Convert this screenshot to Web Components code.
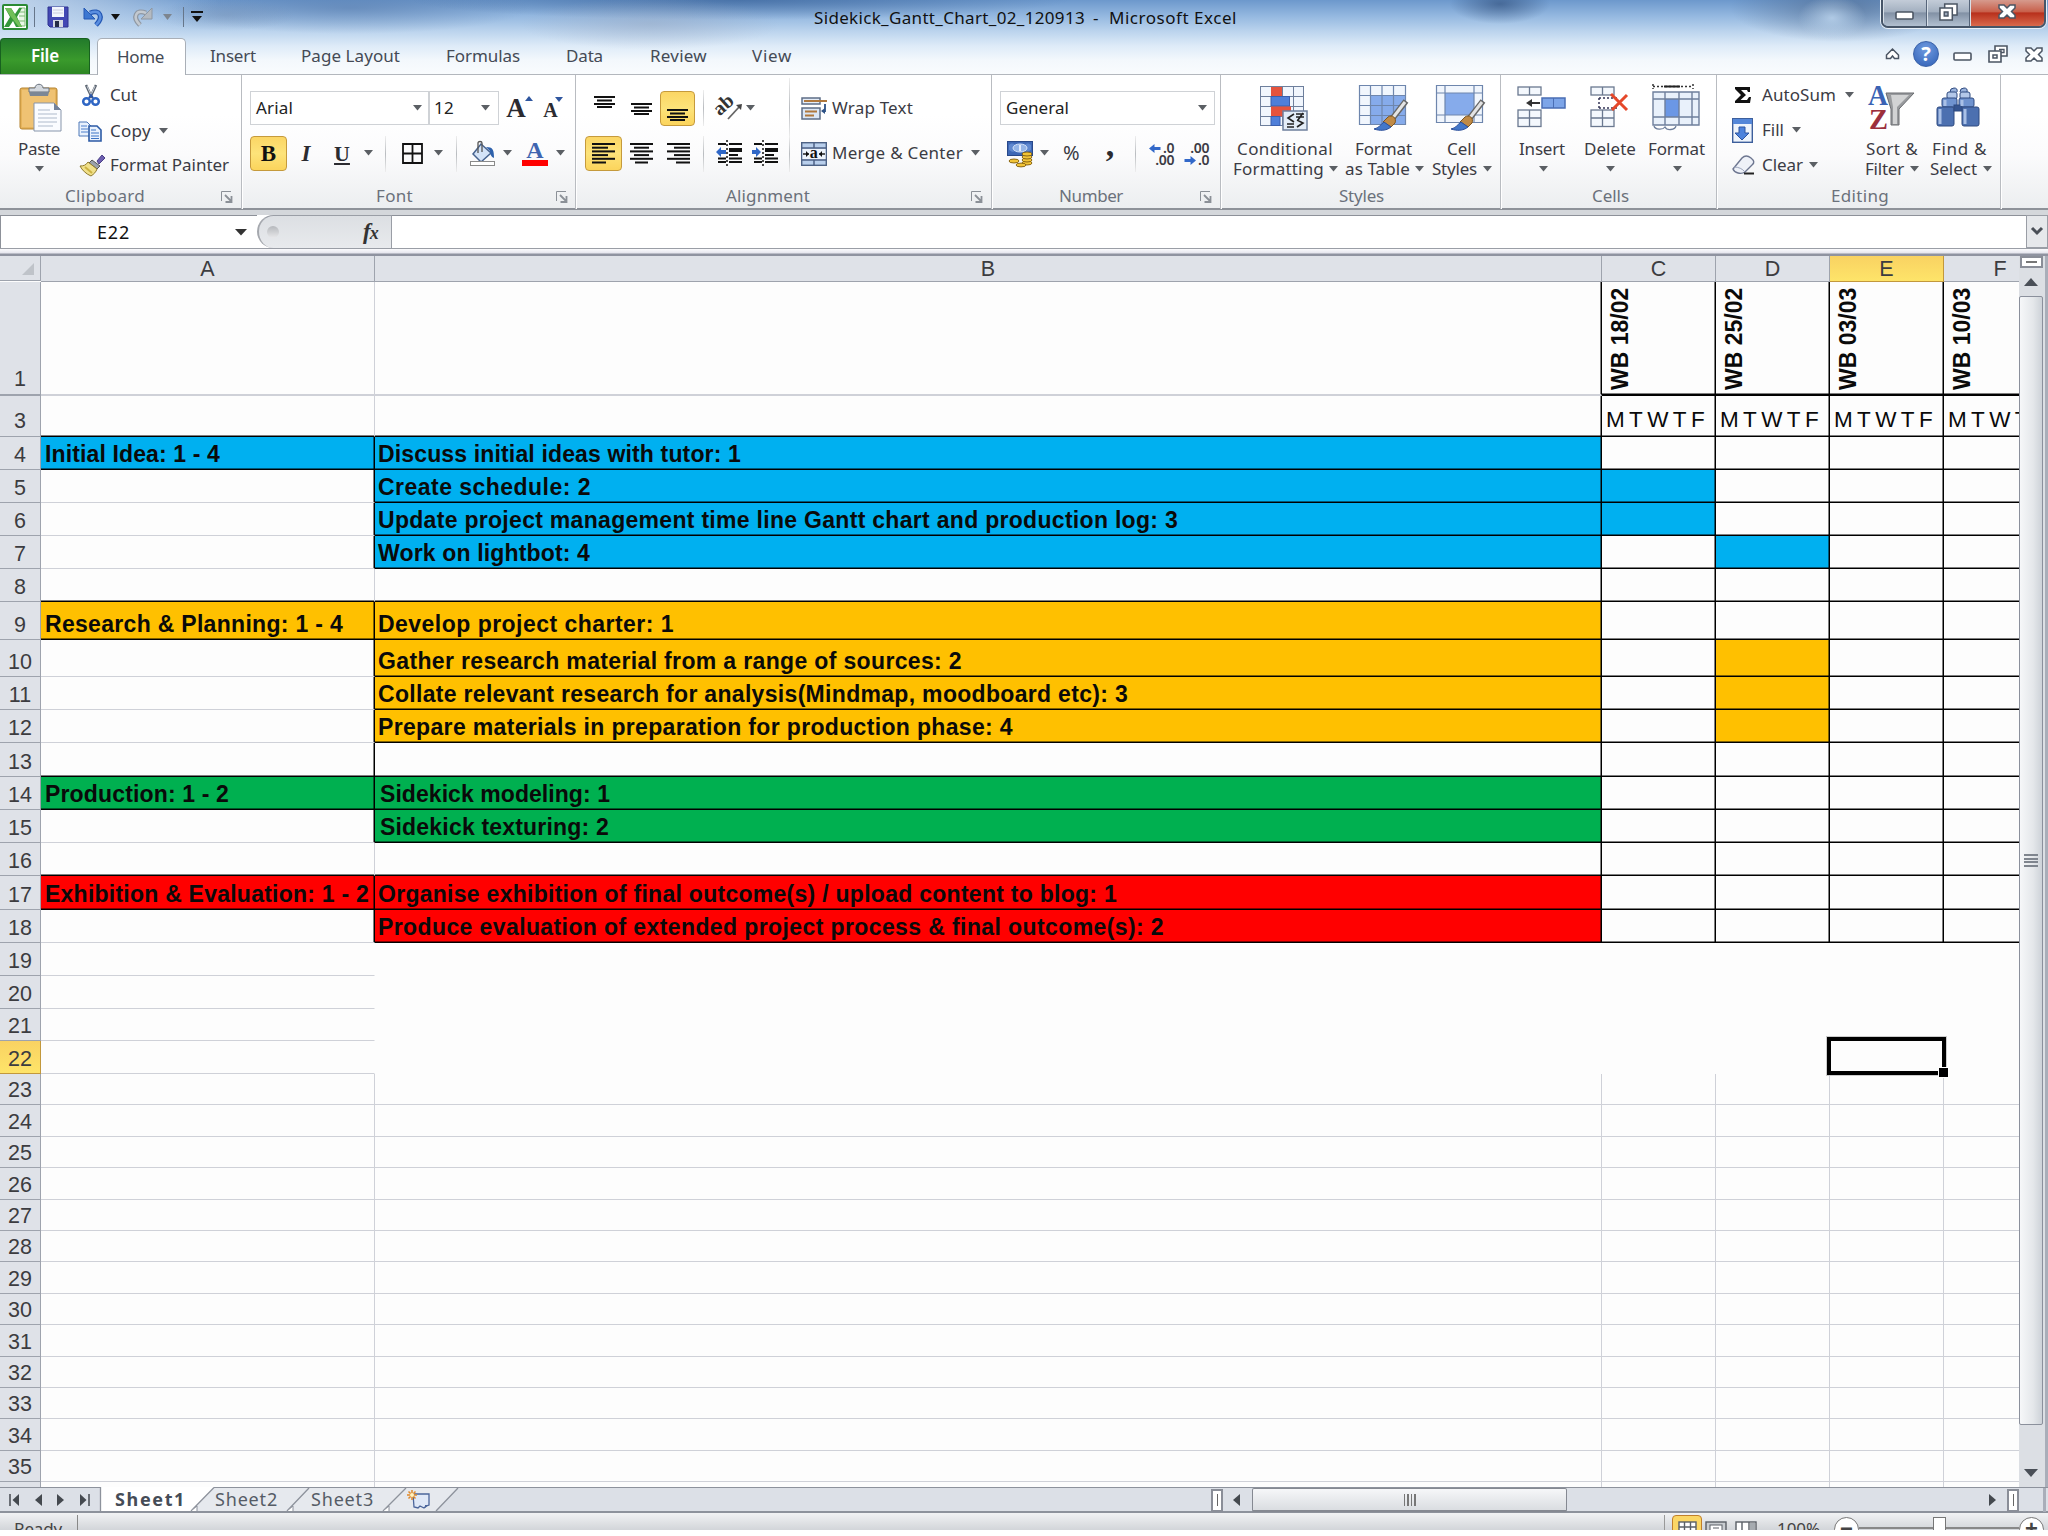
<!DOCTYPE html>
<html lang="en">
<head>
<meta charset="utf-8">
<title>Sidekick_Gantt_Chart_02_120913 - Microsoft Excel</title>
<style>
html,body{margin:0;padding:0;background:#fff;overflow:hidden}
body{width:2048px;height:1536px;font-family:"Noto Sans","Open Sans",sans-serif}
</style>
</head>
<body>
<excel-window></excel-window>
<script>
const UI='"Noto Sans","Open Sans",sans-serif', SHEET='"Liberation Sans",Arial,sans-serif';
const define=(tag,css,html,after)=>customElements.define(tag,class extends HTMLElement{
  connectedCallback(){
    if(this.shadowRoot)return;
    const r=this.attachShadow({mode:'open'});
    r.innerHTML='<style>*{box-sizing:border-box}'+css+'</style>'+(typeof html==='function'?html(this):html);
    if(after)after(this,r);
  }
});

/* Text whose tracking is fitted to the width in its w attribute. */
customElements.define('ui-text',class extends HTMLElement{
  connectedCallback(){
    if(this.shadowRoot)return;
    const r=this.attachShadow({mode:'open'}), t=this.getAttribute('t'), w=+this.getAttribute('w');
    r.innerHTML='<style>:host{display:block;white-space:pre;flex:none}span{display:inline-block}</style><span></span>';
    const s=r.querySelector('span'); s.textContent=t;
    if(w){
      const n=s.getBoundingClientRect().width;
      s.style.letterSpacing=((w-n)/t.length).toFixed(3)+'px';
    }
  }
});
const T=(t,w,st='')=>`<ui-text t="${t.replace(/&/g,'&amp;')}" w="${w||''}" style="${st}"></ui-text>`;

/* ---------- icons ---------- */
const lines=(xs)=>xs.map(([x,y,w])=>`<rect x="${x}" y="${y}" width="${w}" height="2"/>`).join('');
const brush='<path d="M47 16 33 34" stroke="#666" stroke-width="6"/><path d="M46 17 33 34" stroke="#e4e4e4" stroke-width="3"/><path d="M29 32c4-3 9 1 7 6l-4 4-8-5z" fill="#c08a45" stroke="#7d5520"/><path d="M25 37l7 5c-5 4-11 4-17 2 5-1 6-4 10-7z" fill="#4377c9" stroke="#2c509c"/>';
const G={
 excel:[26,26,'<rect x="1" y="1" width="24" height="24" rx="1" fill="#fff" stroke="#2c8a35" stroke-width="2"/><path d="M17 4h6v18h-6" fill="#e9f6e6" stroke="#7dbb74"/><path d="M17 8h6M17 12h6M17 17h6" stroke="#7dbb74"/><path d="M3 4h6l4 6 4-6h3l-5 9 5 10h-6l-3-6-4 6H2l6-10z" fill="#35973a"/><path d="M3 4l6 9 8 10h3L9 4z" fill="#72bf58"/>'],
 save:[22,22,'<path d="M1 1h20v20H3l-2-2z" fill="#4348b4" stroke="#2e3290"/><rect x="5" y="1" width="12" height="10" fill="#f2f5fd"/><path d="M6 4h10M6 7h10" stroke="#ccd"/><rect x="6" y="14" width="10" height="7" fill="#d5dae2"/><rect x="8" y="15" width="4" height="6" fill="#252d45"/>'],
 undo:[20,18,'<path d="M7 5c10-4 14 4 6 12" fill="none" stroke="#2458b4" stroke-width="5"/><path d="M1 0v11h11z" fill="#3c77d1" stroke="#2458b4"/><path d="M7 5c10-4 14 4 6 12" fill="none" stroke="#5a8ee0" stroke-width="2.5"/>'],
 redo:[20,18,'<path d="M13 5C3 1 -1 9 7 17" fill="none" stroke="#8f98a3" stroke-width="5"/><path d="M19 0v11H8z" fill="#b4bac1" stroke="#8f98a3"/><path d="M13 5C3 1 -1 9 7 17" fill="none" stroke="#c3c9d0" stroke-width="2.5"/>'],
 custom:[12,12,'<path d="M0 1h12" stroke="#111" stroke-width="2"/><path d="M1 5h10l-5 6z" fill="#111"/>'],
 dd:[10,6,'<path d="M0 0h10L5 6z" fill="currentColor"/>'],
 paste:[44,48,'<rect x="1" y="4" width="37" height="41" rx="2" fill="#e6b45c" stroke="#b5832f"/><rect x="3" y="6" width="33" height="37" fill="#efc273"/><path d="M10 8V4h6c0-5 8-5 8 0h6v4z" fill="#d3d8de" stroke="#68717d"/><path d="M10 8h20l-1 4H11z" fill="#7c8795"/><path d="M15 19h20l7 7v21H15z" fill="#fafcff" stroke="#8795aa"/><path d="M35 19v7h7z" fill="#75839a"/><path d="M19 26h12M19 30h19M19 34h19M19 38h19M19 42h15" stroke="#aebacb"/>'],
 cut:[18,22,'<path d="M4 0l6 13M14 0L8 13" stroke="#5b6470" stroke-width="2.5"/><path d="M5 1l4 9M13 1l-4 9" stroke="#c8ced6"/><circle cx="4.5" cy="16.500" r="3.300" fill="none" stroke="#2f66c4" stroke-width="2.500"/><circle cx="13.500" cy="16.500" r="3.300" fill="none" stroke="#2f66c4" stroke-width="2.500"/><path d="M7 13l2-3 2 3" stroke="#2b55a6" fill="none" stroke-width="2"/>'],
 copy:[24,21,'<path d="M1 1h8l4 4v10H1z" fill="#eaf2fd" stroke="#4f78b8"/><path d="M3 5h6M3 8h7M3 11h7" stroke="#4d7fcb"/><path d="M11 5h8l4 4v11H11z" fill="#eaf2fd" stroke="#2c5aa5" stroke-width="1.600"/><path d="M13 9h5M13 12h8M13 15h8M13 17.500h8" stroke="#3d74c5"/>'],
 painter:[26,21,'<path d="M18 6l5-6 3 3-6 6z" fill="#6d5fb0" stroke="#4a3f87"/><path d="M13 5l8 6-3 3-8-6z" fill="#9aa1ab" stroke="#555"/><path d="M9 7l9 7c-1 3-3 5-6 7C7 19 3 15 1 11c4 0 6-1 8-4z" fill="#f0e08a" stroke="#8f7a2d"/><path d="M6 12l7 6" stroke="#cdb343" stroke-width="2"/>'],
 launch:[12,12,'<path d="M.500 10V.500H10" fill="none" stroke="#8b9097"/><path d="M4 4l6 6M10.500 5v6h-6" fill="none" stroke="#8b9097" stroke-width="1.800"/>'],
 border:[21,21,'<path d="M1 1h19v19H1zM10.500 1v19M1 10.500h19" fill="none" stroke="#111" stroke-width="1.800"/>'],
 fill:[25,25,'<path d="M11 3l10 9-10 9-8-8z" fill="#d4e3f7" stroke="#47638f" stroke-width="1.500"/><path d="M8 12V2c0-2 4-2 4 0v9" fill="none" stroke="#555" stroke-width="1.300"/><path d="M16 6c7 0 8 3 8 11-3-1-4-4-4-7z" fill="#2e61ac"/><rect x=".500" y="20.500" width="24" height="4" fill="#fff" stroke="#8a8a8a"/>'],
 orient:[26,24,'<text x="-2" y="15" transform="rotate(-42 7 13)" font-family="Liberation Serif" font-weight="bold" font-size="20" fill="#333">ab</text><path d="M10 23L22 10" stroke="#666" stroke-width="1.800"/><path d="M24 8l-6 1 5 5z" fill="#444"/>'],
 at:[23,12,lines([[1,0,21],[4,3.5,15],[1,7,21],[4,10,15]])],
 left:[23,21,lines([[0,0,23],[0,3.700,16],[0,7.400,23],[0,11.100,16],[0,14.800,23],[0,18.500,14]])],
 center:[23,21,lines([[0,0,23],[4,3.700,15],[0,7.400,23],[4,11.100,15],[0,14.800,23],[5,18.500,13]])],
 right:[23,21,lines([[0,0,23],[7,3.700,16],[0,7.400,23],[7,11.100,16],[0,14.800,23],[9,18.500,14]])],
 dec:[26,27,'<path d="M2 4h8M13 4h13M2 22h8M13 22h13" stroke="#111" stroke-width="2"/><rect x="13" y="8" width="13" height="4"/><path d="M13 15h9M2 18.500h8M13 18.500h13" stroke="#111" stroke-width="2"/><path d="M11 0v27" stroke="#111" stroke-width="1.500" stroke-dasharray="2 2"/><path d="M0 12l5-5v3h5v4H5v3z" fill="#2f67c7"/>'],
 inc:[26,27,'<path d="M2 4h8M13 4h13M2 22h8M13 22h13" stroke="#111" stroke-width="2"/><rect x="13" y="8" width="13" height="4"/><path d="M13 15h9M2 18.500h8M13 18.500h13" stroke="#111" stroke-width="2"/><path d="M11 0v27" stroke="#111" stroke-width="1.500" stroke-dasharray="2 2"/><path d="M9 12l-5-5v3H0v4h4v3z" fill="#2f67c7"/>'],
 wrap:[26,23,'<rect x="1" y="1" width="18" height="6" fill="#e5edf8" stroke="#5d6d86" stroke-width="1.500"/><path d="M3 4h23" stroke="#b0783c" stroke-width="2"/><rect x="1" y="11" width="18" height="11" fill="#dbe7f6" stroke="#5d6d86" stroke-width="1.500"/><path d="M4 14.500h12M4 18.500h9" stroke="#b0783c" stroke-width="2"/><path d="M24 7v7h-1" stroke="#2d5186" stroke-width="1.800" fill="none"/><path d="M20 14l4-3v6z" fill="#2d5186"/>'],
 merge:[26,24,'<rect x=".700" y=".700" width="24.600" height="22.600" fill="#b9cfec" stroke="#4d6285" stroke-width="1.400"/><path d="M0 6h26M0 18h26M13 0v6M13 18v6" stroke="#4d6285" stroke-width="1.500"/><rect x="1.500" y="7" width="23" height="10" fill="#eef4fc"/><path d="M2 12h6M24 12h-6" stroke="#222" stroke-width="1.500"/><path d="M8 12l-3-3v6zM18 12l3-3v6z"/><text x="8.800" y="16" font-family="Liberation Serif" font-weight="bold" font-size="16">a</text>'],
 money:[26,26,'<rect x=".500" y=".500" width="25" height="14" fill="#3d67b5" stroke="#28488a"/><path d="M2 4c3-3 6-1 6 0v6c-2 2-4 0-6-1zM24 4c-3-3-6-1-6 0v6c2 2 4 0 6-1z" fill="#5f88cf"/><ellipse cx="13" cy="7" rx="7" ry="4" fill="#94b4e6" stroke="#d6e4fa"/><path d="M13 4v6" stroke="#dfeafd" stroke-width="2"/><g fill="#f2c437" stroke="#7d5a10" stroke-width=".900"><ellipse cx="20" cy="22" rx="5" ry="2"/><ellipse cx="20" cy="19" rx="5" ry="2"/><ellipse cx="20" cy="16" rx="5" ry="2"/><ellipse cx="20" cy="13" rx="5" ry="2"/><ellipse cx="7" cy="20" rx="5" ry="2"/><ellipse cx="14" cy="24" rx="5" ry="1.900"/></g>'],
 larrow:[12,9,'<path d="M0 4.500l5.500-4.500v3h6v3h-6v3z" fill="#3268c9"/>'],
 rarrow:[12,9,'<path d="M12 4.500L6.500 0v3h-6v3h6v3z" fill="#3268c9"/>'],
 cond:[48,45,'<g stroke="#6e7f9c"><rect x=".500" y=".500" width="43" height="39" fill="#f1f6fd"/><path d="M11.500 0v40M22.500 0v40M33.500 0v40M0 10.500h44M0 20.500h44M0 30.500h44"/></g><rect x="11" y="1" width="11" height="9.500" fill="#e5533d"/><rect x="11" y="10.500" width="18.500" height="9.500" fill="#4f7fd9" stroke="#3a5fae"/><rect x="11" y="20.500" width="20" height="10" fill="#e5533d"/><rect x="11" y="30.500" width="9" height="9" fill="#4f7fd9" stroke="#3a5fae"/><rect x="23" y="25" width="24" height="19" fill="#e4edf8" stroke="#6e7f9c" stroke-width="1.500"/><path d="M34 28l-6 4 6 4M27 38h7M27 41h7M36 28h8M36 31h8M43 27l-5 7M37 34l6 3-6 4" fill="none" stroke="#222" stroke-width="1.600"/>'],
 ftable:[49,46,'<rect x=".500" y=".500" width="46" height="39" fill="#f1f6fd"/><path d="M11.500 10.500H46v29H11.500z" fill="#86abeb"/><path d="M.500.500h46v39H.500zM11.500 0v40M23 0v40M34.500 0v40M0 10.500h47M0 20.500h47M0 30.500h47" fill="none" stroke="#6e86ad" stroke-width="1.200"/>'+brush],
 cstyle:[49,46,'<rect x=".500" y=".500" width="46" height="37" fill="#f1f6fd"/><rect x="9" y="8" width="29" height="22" fill="#86abeb"/><path d="M.500.500h46v37H.500zM9 0v38M38 0v38M0 8h47M0 30h47" fill="none" stroke="#6e86ad" stroke-width="1.200"/>'+brush],
 insert:[49,42,'<g fill="#f4f8fd" stroke="#6a7890" stroke-width="1.300"><rect x="1" y="1" width="23" height="8"/><path d="M12.500 1v8"/><rect x="1" y="24" width="23" height="16.500"/><path d="M12.500 24v16M1 32h23"/></g><rect x="25" y="12" width="23" height="10" fill="#7da5e8" stroke="#4a6eb4" stroke-width="1.500"/><path d="M36.500 12v10" stroke="#4a6eb4"/><path d="M12 17h11" stroke="#333" stroke-width="2"/><path d="M9 17l6-4v8z" fill="#333"/>'],
 del:[39,42,'<g fill="#f4f8fd" stroke="#6a7890" stroke-width="1.300"><rect x="1" y="1" width="23" height="8"/><path d="M12.500 1v8"/><rect x="1" y="24" width="23" height="16.500"/><path d="M12.500 24v16M1 32h23"/></g><path d="M9 12h18M9 22h18M9 12v10" stroke="#335" stroke-dasharray="2 2" stroke-width="1.500"/><path d="M21 8l16 16M37 9L22 24" stroke="#e5482a" stroke-width="3"/>'],
 fmt:[49,46,'<path d="M1 0v5M41 0v5M1 2.500h40" stroke="#333" stroke-width="1.500" stroke-dasharray="2 2"/><path d="M12 2.500h16" stroke="#222" stroke-width="2"/><rect x="1" y="8" width="46" height="33" fill="#e9f1fb"/><rect x="13" y="15" width="14" height="18" fill="#6b97e5"/><path d="M1 8h46v33H1zM13 8v33M27 8v33M40 8v33M1 15h46M1 33h46" fill="none" stroke="#6e7f9c" stroke-width="1.400"/><path d="M2 42c1 4 9 4 11 1 2 4 10 3 11-1" fill="#fff" stroke="#6e7f9c" stroke-width="1.300"/>'],
 sigma:[16,16,'<path d="M0 0h15v5h-2L12 3H6l5 5-5.500 5H12l2-3h2l-1 6H0v-2l6-6-6-6z" fill="#111"/>'],
 filld:[21,25,'<rect x=".700" y=".700" width="19.600" height="23.600" fill="#eef4fc" stroke="#3d5f9c" stroke-width="1.400"/><rect x="1" y="1" width="19" height="5" fill="#5487d9"/><path d="M7 9h6v6h4l-7 7-7-7h4z" fill="#4c82dc" stroke="#2c54a0"/>'],
 clear:[22,20,'<path d="M1 14L10 3q4-4 9 0t1 7l-7 7q-3 2-7 1t-5-4z" fill="#eef1f8" stroke="#6d7690" stroke-width="1.400"/><path d="M2 12q7 0 11 5" fill="none" stroke="#9aa3bb"/><path d="M12 18.500h10" stroke="#222" stroke-width="2"/>'],
 sort:[46,46,'<text x="-1" y="20.500" font-family="Liberation Serif" font-weight="bold" font-size="29" textLength="20" lengthAdjust="spacingAndGlyphs" fill="#3a63b4">A</text><text x="0" y="45" font-family="Liberation Serif" font-weight="bold" font-size="30" textLength="19" lengthAdjust="spacingAndGlyphs" fill="#9c2f3c">Z</text><path d="M17 9h28L30 25v16h-8V25z" fill="#999b9e" stroke="#6a6c70"/><path d="M22 11h18L28 23v17h-4V23z" fill="#d2d3d4"/>'],
 find:[44,40,'<g stroke="#2e4a80"><path d="M14 5q0-4 4-4t3 4M24 5q0-4 4-4t3 4" fill="#9ab3dc"/><rect x="11" y="5" width="10" height="7" rx="2" fill="#b3c8e9"/><rect x="24" y="5" width="10" height="7" rx="2" fill="#b3c8e9"/><rect x="6" y="11" width="15" height="9" rx="2" fill="#6f93cf"/><rect x="23" y="11" width="15" height="9" rx="2" fill="#6f93cf"/><rect x="1" y="20" width="17" height="19" rx="2" fill="#4c70b0"/><rect x="26" y="20" width="17" height="19" rx="2" fill="#4c70b0"/><rect x="18" y="18" width="8" height="6" fill="#34548f"/></g><path d="M4 22v15M29 22v15M9 13v6M26 13v6" stroke="#a9c0e6" stroke-width="3"/>'],
 caret:[15,12,'<path d="M1.500 7L7.500 1l6 6v3.500h-4L7.500 8l-2 2.500h-4z" fill="#fff" stroke="#4b5563" stroke-width="1.500"/>'],
 wmin:[19,9,'<rect x="1" y="1" width="17" height="7" rx="1" fill="#fff" stroke="#4b5563" stroke-width="1.600"/>'],
 wres:[20,18,'<path d="M7 1h12v10H7z" fill="#fff" stroke="#4b5563" stroke-width="1.600"/><path d="M1 6h12v11H1z" fill="#fff" stroke="#4b5563" stroke-width="1.600"/><path d="M5 10h4v3H5z" fill="#fff" stroke="#4b5563" stroke-width="1.500"/><path d="M11 4.500h5v3h-3" fill="none" stroke="#4b5563" stroke-width="1.300"/>'],
 wx:[18,15,'<path d="M1 1h5l3 3 3-3h5v3l-3.500 3.500L17 11v3h-5l-3-3-3 3H1v-3l3.500-3.500L1 4z" fill="#fff" stroke="#4b5563" stroke-width="1.500"/>'],
 wres2:[20,18,'<path d="M6 1h13v11H6z" fill="#fff" stroke="#4b5563" stroke-width="1.600"/><path d="M1 5h13v12H1z" fill="#fff" stroke="#4b5563" stroke-width="1.600"/><path d="M5.500 9h4v4h-4z" fill="#9aa7b8" stroke="#4b5563" stroke-width="1.500"/>'],
 corner:[12,12,'<path d="M12 0v12H0z" fill="#bfc3c9"/>'],
 up:[14,8,'<path d="M7 0l7 8H0z" fill="#4a4f57"/>'],
 down:[14,8,'<path d="M7 8l7-8H0z" fill="#4a4f57"/>'],
 bup:[8,5,'<path d="M4 0l4 5H0z" fill="#2f569f"/>'],
 bdown:[8,5,'<path d="M4 5l4-5H0z" fill="#2f569f"/>'],
 lt:[7,12,'<path d="M7 0v12L0 6z" fill="#44494f"/>'],
 rt:[7,12,'<path d="M0 0v12l7-6z" fill="#44494f"/>'],
 first:[10,12,'<path d="M1 0v12" stroke="#44494f" stroke-width="1.500"/><path d="M10 0v12L3.500 6z" fill="#44494f"/>'],
 last:[10,12,'<path d="M9 0v12" stroke="#44494f" stroke-width="1.500"/><path d="M0 0v12l6.500-6z" fill="#44494f"/>'],
 chev:[12,9,'<path d="M1 1l5 5 5-5" fill="none" stroke="#4a4f57" stroke-width="3"/>'],
 newsheet:[23,19,'<path d="M6 4h16v11l-3 1-2 2-4-2-2 2-4-1z" fill="#dfe8f7" stroke="#4b659b" stroke-width="1.300"/><path d="M22 15l-4 3v-3z" fill="#4b659b"/><path d="M5 0v10M0 5h10M1.500 1.500l7 7M8.500 1.500l-7 7" stroke="#e0892a" stroke-width="1.500"/><circle cx="5" cy="5" r="2" fill="#fff3c0"/>'],
 vnorm:[19,16,'<rect x="1" y="1" width="17" height="20" fill="#fff" stroke="#5a5f66" stroke-width="1.400"/><path d="M6.500 1v15M12.500 1v15M1 6h17M1 11h17" stroke="#5a5f66" stroke-width="1.400"/>'],
 vpage:[22,12,'<rect x="1" y="1" width="20" height="20" fill="#c9cdd1" stroke="#5a5f66" stroke-width="1.400"/><rect x="5" y="4" width="12" height="16" fill="#fff" stroke="#5a5f66"/><path d="M8 7h6M8 10h6" stroke="#5a5f66"/>'],
 vbreak:[22,12,'<rect x="1" y="1" width="20" height="20" fill="#fff" stroke="#5a5f66" stroke-width="1.400"/><path d="M7 1v12M14 1v12" stroke="#5a5f66" stroke-width="1.400"/><rect x="15" y="2" width="5" height="14" fill="#a6abb0"/>']
};
define('ui-icon',':host{display:block;flex:none;line-height:0}svg{display:block;overflow:visible}',e=>{
  const [w,h,b]=G[e.getAttribute('n')];
  return `<svg width="${e.getAttribute('w')||w}" height="${e.getAttribute('h')||h}" viewBox="0 0 ${w} ${h}" preserveAspectRatio="none" fill="#111">${b}</svg>`;
});
const I=(n,st='',w='',h='')=>`<ui-icon n="${n}" w="${w}" h="${h}" style="${st}"></ui-icon>`;

/* A flex line: every item is [left edge, width, content]; gaps become margins. */
const line=(h,x0,items,st='')=>{
  let x=x0;
  return `<div class="line" style="height:${h}px;${st}">`+items.map(([l,w,c,s=''])=>{
    const m=l-x; x=l+w;
    return `<div class="it" style="width:${w}px;margin-left:${m.toFixed(1)}px;${s}">${c}</div>`;
  }).join('')+'</div>';
};
const LCSS='.line{display:flex;align-items:center}.it{flex:none;display:flex;align-items:center;white-space:pre}';
const txt=(x,w,t,st='')=>[x,w,T(t,w),'padding-bottom:2px;'+st];
const ic=(x,n,st='',w='',h='')=>[x,w||G[n][0],I(n,'',w,h),st];
const dd=(cx)=>[cx-4.5,9,I('dd','color:#5b5f64',9,5.5),'padding-bottom:1px'];
const sep=(x,h=36)=>[x,1,`<i style="width:1px;height:${h}px;background:linear-gradient(#eee,#b9bcc0,#eee)"></i>`];

/* ---------- title bar ---------- */
define('title-bar',LCSS+`:host{display:flex;height:38px;font:17px ${UI};color:#111;position:relative}
.q{width:240px}.t{flex:1}
.win{display:flex;width:165px;height:28px;margin-right:2px;border:2px solid #465568;border-top:0;border-radius:0 0 7px 7px;overflow:hidden;box-shadow:0 0 0 1px #e8f0f8}
.win div{display:flex;align-items:center;justify-content:center;background:linear-gradient(#c3ccd8,#a3b0c0 45%,#8291a5 50%,#b2c0d0);border-right:1px solid #56657a;box-shadow:inset 1px 0 #d8e0e8}
.win div.x{background:linear-gradient(#d69a8d,#c8604b 45%,#b8301c 50%,#d9694c);border:0;flex:1}`,
()=>`<div class="q">`+line(33,0,[ic(2,'excel'),[34,1,'<i style="width:1px;height:20px;background:#66768a"></i>'],ic(47,'save'),ic(83,'undo'),[111,10,I('dd','color:#111',9,6)],ic(133,'redo'),[163,10,I('dd','color:#7d858f',9,6)],[183,1,'<i style="width:1px;height:20px;background:#66768a"></i>'],ic(191,'custom')])+`</div>
<div class="t">`+line(36,240,[txt(814,271,'Sidekick_Gantt_Chart_02_120913'),txt(1093,6,'-'),txt(1109,128,'Microsoft Excel')])+`</div>
<div class="win"><div style="width:44px">${I('wmin','margin-top:5px')}</div><div style="width:43px">${I('wres2','margin-top:-3px',19,18)}</div><div class="x">${I('wx','margin-top:-3px')}</div></div>`);

/* ---------- tabs ---------- */
define('ribbon-tabs',`:host{display:flex;height:37px;font:17px ${UI};color:#444a55;border-bottom:1px solid #b3b7bd}
.tab{flex:none;height:36px;display:flex;align-items:center;padding-bottom:2px}
.file{width:90px;padding-left:30px;background:linear-gradient(#227a2b,#3a9a2c 60%,#2d8623);border:1px solid #17611f;border-bottom:0;border-radius:4px 4px 0 0;color:#fff;font-weight:600;margin-right:7px}
.home{width:89px;height:37px;padding-left:19px;background:#fff;border:1px solid #a9afb7;border-bottom:0;border-radius:5px 5px 0 0}
.r{margin-left:auto;display:flex;align-items:center;height:36px;margin-top:-2px}
.help{width:26px;height:26px;border-radius:50%;background:radial-gradient(circle at 50% 30%,#6f9be0,#2f5fb5);border:1px solid #3961a8;color:#fff;font-weight:700;font-size:20px;line-height:24px;text-align:center}`,
()=>`<div class="tab file">${T('File',28)}</div><div class="tab home">${T('Home',47)}</div>`+
[['Insert',210,46,186],['Page Layout',301,99,256],['Formulas',446,74,400],['Data',566,37,520],['Review',650,57,603],['View',752,40,707]].map(([t,x,w,p])=>`<div class="tab" style="padding-left:${x-p}px;width:${x-p+w}px">${T(t,w)}</div>`).join('')+
`<div class="r">${I('caret','margin-right:13px')}<div class="help">?</div>${I('wmin','margin:4px 16px 0 14px')}${I('wres','margin-right:17px')}${I('wx','margin-right:5px')}</div>`);

/* ---------- ribbon ---------- */
define('ribbon-group',`:host{display:flex;flex-direction:column;flex:none;height:134px;border-right:1px solid #b9bcc1;box-shadow:1px 0 #fff}
.b{display:flex;height:107px;flex-direction:column}.l{display:flex;height:27px;align-items:flex-start;color:#6b717b;position:relative}`,
e=>{const [x0,x1,lx,lw,la]=JSON.parse(e.getAttribute('g'));
 return `<div class="b"><slot></slot></div><div class="l">${T(e.getAttribute('label'),lw,`margin-left:${lx-x0}px;margin-top:2px`)}${la?I('launch',`margin-left:${la-lx-lw}px;margin-top:9px`):''}</div>`;},
(e)=>{const [x0,x1]=JSON.parse(e.getAttribute('g'));e.style.width=(x1-x0)+'px';});
const group=(label,g,body)=>`<ribbon-group label="${label}" g="${JSON.stringify(g)}">${body}</ribbon-group>`;
const combo=(x,w,t,tw,pl,ac)=>[x,w,`<div class="combo" style="width:${w}px;padding-left:${pl}px">${T(t,tw)}${I('dd',`color:#5b5f64;margin-left:${ac-5.5-x-pl-tw-1}px`,9,5.500)}</div>`];
const btn=(x,w,n,st='')=>[x,w,`<div class="on" style="width:${w}px;height:35px">${G[n]?I(n,st):n}</div>`];
const serif=(x,w,t,st)=>[x,w,`<span style="font-family:'Liberation Serif';color:#2b2b30;${st}">${t}</span>`,'justify-content:center'];
define('excel-ribbon',LCSS+`:host{display:flex;height:135px;background:linear-gradient(#fff 30%,#fbfbfc 60%,#eceef0);border-bottom:2px solid #8e9299;font:17px ${UI};color:#3b3b44}
.combo{display:flex;align-items:center;height:34px;border:1.500px solid #cfd2d6;background:#fff;color:#222;padding-bottom:1px}
.on{display:flex;align-items:center;justify-content:center;background:linear-gradient(#fbd665,#fde37a 50%,#fbd45c);border:1.500px solid #c59a3c;border-radius:4px}
.on b{font:bold 23px/26px 'Liberation Serif';color:#111}
.dec{font-weight:600;font-size:14px;line-height:11.500px;width:25px;letter-spacing:-.4px}.dec div{display:flex;justify-content:flex-end}.dec div.a{justify-content:space-between}
.cols{display:flex}`,()=>
 group('Clipboard',[0,242,65,80,221],`<div class="cols"><div style="width:76px">`+
   line(64,0,[ic(19,'paste')],'padding-top:1px')+line(20,0,[txt(18,42,'Paste')])+line(20,0,[dd(39)])+
   `</div><div>`+line(41,76,[ic(82,'cut'),txt(110,27,'Cut')])+line(30,76,[ic(78,'copy'),txt(110,41,'Copy'),dd(163)])+line(38,76,[ic(79,'painter'),txt(110,119,'Format Painter')])+`</div></div>`)+
 group('Font',[242,576,376,37,556],
   line(66,242,[combo(250,179,'Arial',37,5,418),combo(429,70,'12',20,4,486),serif(506,20,'A','font-size:27px;font-weight:bold'),[525,8,I('bup','margin-top:-20px')],serif(543,15,'A','font-size:20px;font-weight:bold;margin-top:5px'),[555,8,I('bdown','margin-top:-18px')]])+
   line(25,242,[btn(250,37,'<b>B</b>'),serif(296,20,'<i>I</i>','font-size:23px;font-weight:bold'),serif(332,20,'<u>U</u>','font-size:22px;font-weight:bold'),dd(368),sep(385),ic(402,'border'),dd(438),sep(456),ic(470,'fill'),dd(507),
     [522,26,`<span style="display:flex;flex-direction:column;align-items:center;width:26px;height:28px"><span style="font:bold 24px/21px Liberation Serif;color:#3f65b0;height:20px">A</span><i style="height:6px;width:26px;background:#f00"></i></span>`],dd(560)]))+
 group('Alignment',[576,992,726,84,971],
   line(66,576,[ic(593,'at','padding-bottom:12px'),ic(630,'at','padding-top:1px'),btn(660,35,'at','margin-top:14px'),sep(703),ic(718,'orient'),dd(750),sep(789,60),ic(801,'wrap'),txt(832,81,'Wrap Text')])+
   line(25,576,[btn(585,37,'left'),ic(630,'center'),ic(667,'right'),sep(703),ic(716,'dec'),ic(752,'inc'),sep(789),ic(801,'merge'),txt(832,131,'Merge & Center'),dd(975)]))+
 group('Number',[992,1221,1059,64,1200],
   line(66,992,[combo(1000,215,'General',63,5,1203)])+
   line(25,992,[ic(1007,'money'),dd(1044),txt(1063,19,'%','font-size:20px'),serif(1104,12,'<b>,</b>','font-size:34px;display:block;margin-top:-18px'),sep(1135),
    [1149,25,`<div class="dec"><div class="a">${I('larrow','margin-top:2px')}.0</div><div>.00</div></div>`],
    [1184,25,`<div class="dec"><div>.00</div><div class="a">${I('rarrow','margin-top:2px')}.0</div></div>`]]))+
 group('Styles',[1221,1501,1339,45],
   line(64,1221,[ic(1260,'cond'),ic(1359,'ftable'),ic(1436,'cstyle')],'padding-top:2px')+
   line(20,1221,[txt(1237,96,'Conditional'),txt(1355,57,'Format'),txt(1447,29,'Cell')])+
   line(21,1221,[txt(1233,91,'Formatting'),dd(1333),txt(1345,65,'as Table'),dd(1419),txt(1432,45,'Styles'),dd(1487)]))+
 group('Cells',[1501,1717,1592,37],
   line(64,1501,[ic(1517,'insert'),ic(1590,'del'),ic(1652,'fmt')])+
   line(20,1501,[txt(1519,46,'Insert'),txt(1584,52,'Delete'),txt(1648,57,'Format')])+
   line(20,1501,[dd(1543),dd(1610),dd(1677)]))+
 group('Editing',[1717,2001,1831,58],`<div class="cols"><div style="width:145px">`+
   line(40,1717,[ic(1735,'sigma'),txt(1762,74,'AutoSum'),dd(1849)])+line(31,1717,[ic(1732,'filld'),txt(1762,22,'Fill'),dd(1796)])+line(38,1717,[ic(1732,'clear'),txt(1762,41,'Clear'),dd(1813)])+
   `</div><div>`+line(64,1862,[ic(1869,'sort'),ic(1936,'find')])+line(20,1862,[txt(1866,52,'Sort &'),txt(1932,55,'Find &')])+line(21,1862,[txt(1865,39,'Filter'),dd(1914),txt(1930,47,'Select'),dd(1987)])+`</div></div>`));

/* ---------- formula bar ---------- */
define('formula-bar',`:host{display:flex;height:46px;padding:5px 0 0;background:linear-gradient(#d4d7db,#d4d7db 5px,#fff 5px,#fff 38px,#9a9ea6 38px,#9a9ea6 39px,#fbfbfd 39px,#e6e6ee 43px,#8f93a0 44px);font:18px ${UI};color:#111}
.n{display:flex;align-items:center;width:257px;height:33px;border-top:1px solid #8d9199;border-left:1px solid #8d9199;background:#fff}
.fx{display:flex;align-items:center;width:135px;height:33px;border:1px solid #9a9ea6;border-left:2px solid #a5a8ae;border-bottom:0;border-radius:17px 0 0 17px;background:linear-gradient(#dcdfe3,#e8eaed)}
.d{width:12px;height:12px;border-radius:50%;background:linear-gradient(#b5b8bc,#e8e8ea);margin-left:8px}
.in{flex:1;height:33px;border-top:1px solid #8d9199}.x{width:22px;height:33px;border:1px solid #9a9ea6;background:#e6e8eb;display:flex;align-items:center;justify-content:center}`,
()=>`<div class="n">${T('E22',33,'margin-left:96px')}${I('dd','margin-left:105px;color:#333',12,6.5)}</div><div class="fx"><div class="d"></div><span style="font:italic bold 23px 'Liberation Serif';margin-left:84px;color:#333">f<span style="font-size:18px;margin-left:-1px">x</span></span></div><div class="in"></div><div class="x">${I('chev')}</div>`);

/* ---------- worksheet ---------- */
const BLUE='#00b0f0',AMB='#ffc000',GRN='#00b050',RED='#ff0000';
const ends=[[1,395],[3,436],[4,469],[5,502],[6,535],[7,568],[8,601],[9,639],[10,676],[11,709],[12,742],[13,776],[14,809],[15,842],[16,875],[17,909],[18,942],[19,975],[20,1008],[21,1040],[22,1073],[23,1104],[24,1136],[25,1167],[26,1199],[27,1230],[28,1261],[29,1293],[30,1324],[31,1356],[32,1387],[33,1418],[34,1450],[35,1481],['',1513]];
const A={4:['Initial Idea: 1 - 4',175,BLUE],9:['Research & Planning: 1 - 4',298,AMB],14:['Production: 1 - 2',184,GRN],17:['Exhibition & Evaluation: 1 - 2',324,RED]};
const B={4:['Discuss initial ideas with tutor: 1',363,BLUE],5:['Create schedule: 2',213,BLUE],6:['Update project management time line Gantt chart and production log: 3',800,BLUE],7:['Work on lightbot: 4',212,BLUE],9:['Develop project charter: 1',296,AMB],10:['Gather research material from a range of sources: 2',584,AMB],11:['Collate relevant research for analysis(Mindmap, moodboard etc): 3',750,AMB],12:['Prepare materials in preparation for production phase: 4',635,AMB],14:['Sidekick modeling: 1',230,GRN],15:['Sidekick texturing: 2',229,GRN],17:['Organise exhibition of final outcome(s) / upload content to blog: 1',739,RED],18:['Produce evaluation of extended project process & final outcome(s): 2',786,RED]};
const fills={C5:BLUE,C6:BLUE,D7:BLUE,D10:AMB,D11:AMB,D12:AMB};
const aBlack=[3,4,8,9,13,14,16,17], aRight=[4,5,6,7,9,10,11,12,13,14,15,17,18];
const WB=['WB 18/02','WB 25/02','WB 03/03','WB 10/03'];
define('sheet-grid',`:host{display:block;width:2019px;height:1231px;overflow:hidden;background:#fdfdfd;font:bold 23px ${SHEET};color:#0a0a0a}
.g{display:grid;grid-template-columns:41px 334px 1227px 114px 114px 114px 113px;width:2057px}
.h{background:#dfe2e8;border-right:1px solid #9ea3ad;border-bottom:1px solid #9ea3ad;display:flex;justify-content:center;font:21.500px ${SHEET};color:#3c3c40}
.h.r{align-items:flex-end;padding-bottom:2px;line-height:24px}.h.c{align-items:center;padding-top:1px;line-height:24px}
.c0{display:flex;align-items:flex-end;padding:0 0 2px 4px;line-height:26px;position:relative;border-right:1px solid transparent;border-bottom:1px solid transparent;white-space:pre;overflow:visible}
.sel{background:linear-gradient(#f9d262,#fee469);border-color:#c2983c}
.wb{align-items:flex-end;padding-left:5px}.wb ui-text{writing-mode:vertical-rl;transform:rotate(180deg)}
.box{position:absolute;left:-3px;top:-4px;width:119px;height:38px;border:4.500px solid #000;box-shadow:0 0 0 1px #ccc;z-index:2}
.box i{position:absolute;right:-7px;bottom:-7px;width:9px;height:9px;background:#000;border:1px solid #fff;box-sizing:content-box}`,
()=>{
 let h=`<div class="g"><div class="h" style="height:25px;align-items:flex-end;justify-content:flex-end;padding:0 6px 5px">${I('corner')}</div>`+'ABCDEF'.split('').map(c=>`<div class="h c ${c==='E'?'sel':''}">${c}</div>`).join('');
 let y=281;
 for(const [n,e] of ends){
  const H=e-y;y=e;
  h+=`<div class="h r ${n===22?'sel':''}" style="height:${H}px;${n===1?'border-bottom-width:2px;':''}${n===1||n===3?'padding-bottom:3px':''}">${n}</div>`;
  for(const c of 'ABCDEF'){
   let inn='',bg='',rb='#cfd1d8',bb='#cfd1d8',cls='',K='#000';
   const main=n!==''&&n<=18, gap=n>=19&&n<=22;
   if(c==='A'){ if(aBlack.includes(n))bb=K; if(aRight.includes(n))rb=K; if(gap)rb='transparent'; if(A[n]){inn=T(A[n][0],A[n][1]);bg=A[n][2];} }
   else if(c==='B'){ if(main){rb=K; if(n!==1)bb=K;} if(gap){rb='transparent';bb='transparent';} if(B[n]){inn=T(B[n][0],B[n][1],n===14||n===15?'margin-left:1px':'margin-left:-1px');bg=B[n][2];} }
   else { if(main){rb=K;bb=K;} if(gap){rb=bb='transparent';}
     const i='CDEF'.indexOf(c);
     if(n===1){cls='wb';inn=`<ui-text t="${WB[i]}" style="height:102px"></ui-text>`;}
     if(n===3)inn=T('M T W T F',98,`font-weight:normal;font-size:22.5px;margin-left:0`);
     bg=fills[c+n]||'';
     if(c==='E'&&n===22)inn='<div class="box"><i></i></div>';
   }
   const sh=[];
   if(rb===K)sh.push('inset -1px 0 rgba(0,0,0,.5)'); if(bb===K)sh.push('inset 0 -1px rgba(0,0,0,.5)');
   h+=`<div class="c0 ${cls}" style="border-right-color:${rb};border-bottom-color:${bb};${n===1?'border-bottom-width:2px;padding-bottom:4px;':''}${n===3?'padding-bottom:3px;':''}${bg?'background:'+bg+';':''}${sh.length?'box-shadow:'+sh.join(',')+';':''}">${inn}</div>`;
  }
 }
 return h+'</div>';
});
define('v-scroll',`:host{display:flex;flex-direction:column;align-items:center;width:29px;height:1231px;background:#dcdfe4;border-right:3px solid #a9aeb9;padding-right:2px}
.s{width:23px;height:12px;background:#fff;border:2px solid #8a8e98;flex:none;display:flex;align-items:center;justify-content:center}.s i{width:11px;height:2px;background:#777}
.t{width:24px;height:1129px;margin-top:10px;border:1.500px solid #8b909c;border-radius:2px;background:linear-gradient(90deg,#f6f7f9,#e4e7ea 60%,#cdd2d8);display:flex;align-items:center;justify-content:center;margin-bottom:44px}
.k{display:flex;flex-direction:column;gap:1.500px}.k i{width:14px;height:2px;background:#7f858e}`,
()=>`<div class="s"><i></i></div>${I('up','margin-top:10px')}<div class="t"><div class="k"><i></i><i></i><i></i><i></i></div></div>${I('down')}`);

/* ---------- sheet tabs ---------- */
define('sheet-tabs',LCSS+`:host{display:flex;height:26px;background:#dce0e7;border-top:1px solid #8d929c;border-bottom:2px solid #8d929c;font:18px ${UI};color:#555c66;position:relative}
.tabs{position:relative;width:480px;height:23px}.tabs svg{position:absolute;left:0;top:-1px}.tabs .line{position:relative}
.th{width:315px;height:24px;border:1px solid #858992;border-bottom-width:2px;border-radius:2px;background:linear-gradient(#f6f7f9,#dadde1);display:flex;gap:2px;align-items:center;justify-content:center}.th i{width:1.500px;height:12px;background:#777}
.sp{width:12px;height:23px;background:#fff;border:2px solid #8a8e98;display:flex;align-items:center;justify-content:center}.sp i{width:1px;height:12px;background:#666}`,
()=>`<div class="tabs"><svg width="480" height="25"><path d="M100 0V24H191L197 20 214 .5V0Z" fill="#fff"/><path d="M214 1H309L287 24H191Z" fill="#e6e9ee"/><path d="M309 1H406L383 24H287Z" fill="#e6e9ee"/><path d="M406 1H458L436 24H383Z" fill="#e6e9ee"/><path d="M100.500 0V24M191 24L214 .5M287 24L309 1M383 24L406 1M436 24L458 1" fill="none" stroke="#8d929c" stroke-width="1.300"/><path d="M191 24l6-5v5M287 24l6-5v5M383 24l6-5v5" fill="#fff" stroke="#8d929c"/></svg>`+
line(23,0,[ic(9,'first'),ic(35,'lt'),ic(57,'rt'),ic(80,'last'),[115,70,T('Sheet1',71,'color:#454c57'),'font-weight:bold;padding-bottom:1px'],txt(215,63,'Sheet2'),txt(311,63,'Sheet3'),ic(407,'newsheet')])+`</div>`+
line(24,480,[[1211,12,'<div class="sp"><i></i></div>'],ic(1233,'lt'),[1252,315,'<div class="th"><i></i><i></i><i></i><i></i></div>'],ic(1989,'rt'),[2007,12,'<div class="sp"><i></i></div>'],[2043,3,'<i style="width:3px;height:24px;background:#a9aeb9"></i>']]));

/* ---------- status bar ---------- */
define('status-bar',LCSS+`:host{display:block;height:17px;overflow:hidden;background:linear-gradient(#f1f2f4,#d2d5d9);font:17px ${UI};color:#444}
.y{width:30px;height:30px;background:#fbd665;border:1.500px solid #c07f2c;border-radius:4px;display:flex;justify-content:center;padding-top:5px}
.c{width:25px;height:25px;border-radius:50%;background:#fff;border:1.500px solid #777;display:flex;align-items:center;justify-content:center;font:bold 22px/22px ${SHEET}}`,
()=>line(34,0,[[14,48,T('Ready',48),'padding-bottom:3px'],[77,1,'<i style="width:1px;height:30px;background:#888"></i>'],[1664,1,'<i style="width:1px;height:30px;background:#999"></i>'],[1672,30,`<div class="y">${I('vnorm')}</div>`],[1705,22,I('vpage'),'padding-bottom:12px;padding-top:6px'],[1735,22,I('vbreak'),'padding-bottom:12px;padding-top:6px'],[1777,43,T('100%',43),'padding-bottom:3px'],[1834,25,'<div class="c">−</div>','padding-bottom:2px'],[1859,74,'<i style="width:74px;height:2px;background:#888"></i>','padding-bottom:4px'],[1933,13,'<i style="width:13px;height:26px;background:#fff;border:1.500px solid #777"></i>'],[1946,73,'<i style="width:73px;height:2px;background:#888"></i>','padding-bottom:4px'],[2019,25,'<div class="c">+</div>','padding-bottom:2px']]));

define('excel-window',`:host{display:flex;flex-direction:column;width:2048px;height:1530px;overflow:hidden}
.top{background:radial-gradient(ellipse 130px 26px at 650px 24px,rgba(150,165,190,.45),transparent),radial-gradient(ellipse 50px 20px at 1500px 4px,rgba(40,70,115,.6),transparent),radial-gradient(ellipse 34px 22px at 1832px 18px,rgba(190,215,240,.8),transparent),radial-gradient(ellipse 110px 34px at 1840px 8px,rgba(70,95,130,.6),transparent),radial-gradient(ellipse 330px 20px at 740px 0,rgba(45,85,140,.55),transparent),radial-gradient(ellipse 70px 16px at 225px 15px,rgba(110,135,170,.35),transparent),radial-gradient(ellipse 180px 26px at 350px 8px,rgba(75,110,160,.45),transparent),radial-gradient(ellipse 220px 60px at 0 0,rgba(225,235,247,.75),transparent),linear-gradient(#6c98cc,#94b8e0 16px,#bdd5ee 32px,#deebf8 46px,#f3f8fc 60px,#fafcfe 75px)}
.mid{display:flex}`,
`<div class="top"><title-bar></title-bar><ribbon-tabs></ribbon-tabs></div><excel-ribbon></excel-ribbon><formula-bar></formula-bar><div class="mid"><sheet-grid></sheet-grid><v-scroll></v-scroll></div><sheet-tabs></sheet-tabs><status-bar></status-bar>`);
</script>
</body>
</html>
